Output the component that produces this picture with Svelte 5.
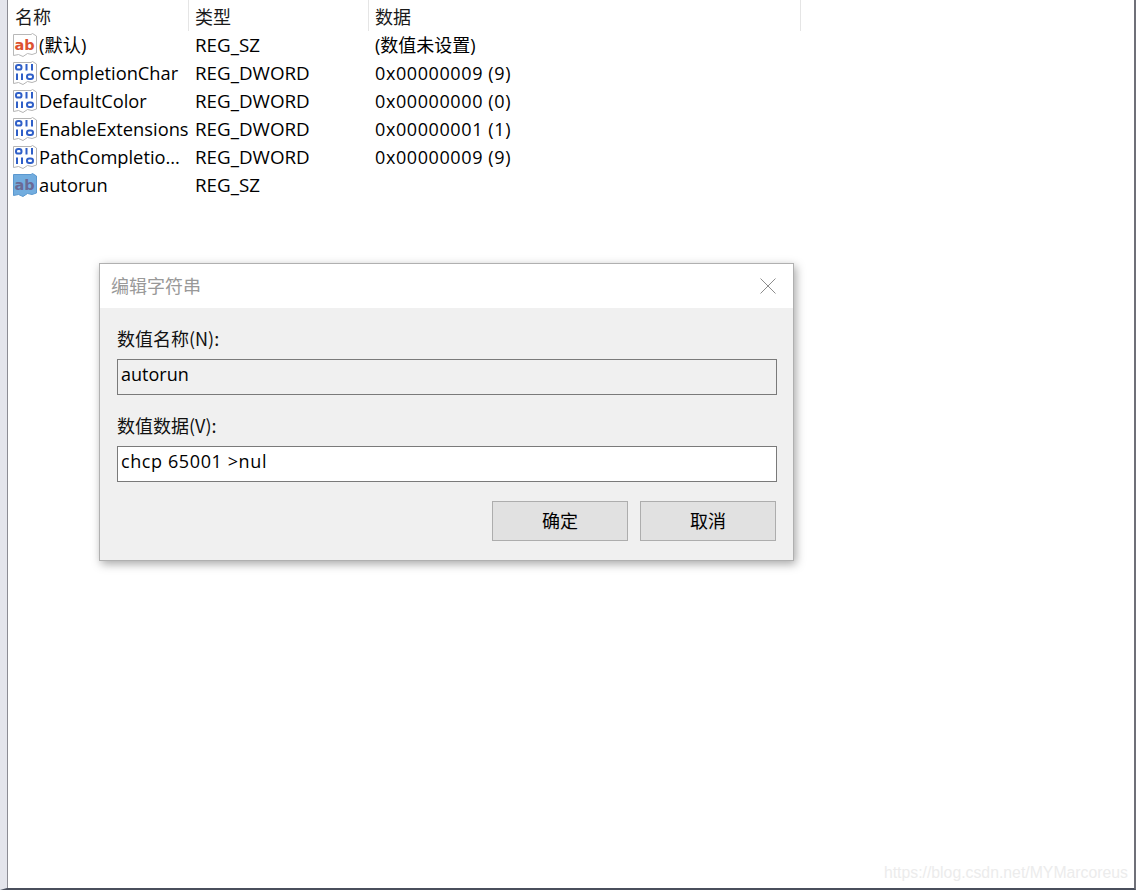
<script>
  const rows = [
    { icon: 'sz', name: '(默认)', type: 'REG_SZ', data: '(数值未设置)', hex: false },
    { icon: 'bin', name: 'CompletionChar', type: 'REG_DWORD', data: '0x00000009 (9)', hex: true },
    { icon: 'bin', name: 'DefaultColor', type: 'REG_DWORD', data: '0x00000000 (0)', hex: true },
    { icon: 'bin', name: 'EnableExtensions', type: 'REG_DWORD', data: '0x00000001 (1)', hex: true },
    { icon: 'bin', name: 'PathCompletio...', type: 'REG_DWORD', data: '0x00000009 (9)', hex: true },
    { icon: 'sel', name: 'autorun', type: 'REG_SZ', data: '', hex: false }
  ];
</script>

{#snippet page(fill, stroke)}
  <path d="M0.5 1.5 H18 L19.5 0.5 L23.5 3 V20 L19 21.5 L14.5 20.5 L10 23.5 L5.5 21.5 L0.5 22.5 Z" fill={fill} stroke={stroke} />
{/snippet}

<div class="window">
  <div class="list">
    <div class="head">
      <div class="hcell c1">名称</div>
      <div class="hcell c2">类型</div>
      <div class="hcell c3">数据</div>
    </div>
    {#each rows as row}
      <div class="row">
        <div class="c1 namecell">
          <svg class="icon" width="24" height="24" viewBox="0 0 24 24">
            {#if row.icon === 'bin'}
              {@render page('#ffffff', '#b4b4b4')}
              <g fill="none" stroke="#2f5fc8" stroke-width="2">
                <rect x="3" y="4" width="5.5" height="4.6" rx="2.2" />
                <path d="M13.5 3v6.6M19 3v6.6" />
                <path d="M4 12.4v6.6M9 12.4v6.6" />
                <rect x="14" y="13.4" width="6" height="4.6" rx="2.2" />
              </g>
            {:else if row.icon === 'sz'}
              {@render page('#ffffff', '#b8b8b8')}
              <text x="11.5" y="16.5" class="ab" fill="#dd5230">ab</text>
            {:else}
              {@render page('#72addf', '#5b98cf')}
              <text x="11.5" y="16.5" class="ab" fill="#6a6a96">ab</text>
            {/if}
          </svg>
          <span class="name">{row.name}</span>
        </div>
        <div class="c2 cell">{row.type}</div>
        <div class="c3 cell" class:hex={row.hex}>{row.data}</div>
      </div>
    {/each}
  </div>

  <div class="dialog">
    <div class="titlebar">
      <span class="title">编辑字符串</span>
      <svg class="close" width="16" height="16" viewBox="0 0 16 16">
        <path d="M0.5 0.5 L15.5 15.5 M15.5 0.5 L0.5 15.5" stroke="#8c8c8c" stroke-width="1" fill="none" />
      </svg>
    </div>
    <div class="body">
      <div class="label first">数值名称(N):</div>
      <div class="field readonly">autorun</div>
      <div class="label second">数值数据(V):</div>
      <div class="field value">chcp 65001 &gt;nul</div>
      <div class="buttons">
        <div class="btn">确定</div>
        <div class="btn">取消</div>
      </div>
    </div>
  </div>

  <div class="watermark">https://blog.csdn.net/MYMarcoreus</div>
</div>

<style>
  :global(body) {
    margin: 0;
    background: #fff;
  }

  .window {
    position: relative;
    box-sizing: border-box;
    width: 1136px;
    height: 890px;
    overflow: hidden;
    background: #fff;
    border-left: 7px solid #e4e5ec;
    border-right: 2px solid #6f7078;
    border-bottom: 2px solid #4a4f5c;
    font-family: "Noto Sans CJK SC", "Noto Sans", sans-serif;
    font-size: 18px;
    color: #000;
  }

  .list {
    border-left: 1px solid #8c8c94;
    height: 100%;
  }

  .head {
    display: flex;
    height: 31px;
  }

  .hcell {
    box-sizing: border-box;
    height: 31px;
    line-height: 33px;
    padding-left: 7px;
    border-right: 1px solid #e5e5e5;
    color: #1a1a1a;
    font-size: 18px;
  }

  .hcell.c2,
  .hcell.c3 {
    padding-left: 6px;
  }

  .c1 {
    width: 181px;
  }

  .c2 {
    width: 180px;
  }

  .c3 {
    width: 432px;
  }

  .row {
    display: flex;
    height: 28px;
    line-height: 28px;
  }

  .namecell {
    display: flex;
    align-items: center;
    font-family: "Open Sans", "Noto Sans CJK SC", sans-serif;
    font-size: 18.3px;
    white-space: nowrap;
  }

  .icon {
    flex: none;
    margin-left: 5px;
    margin-right: 2px;
  }

  .cell {
    box-sizing: border-box;
    padding-left: 6px;
    font-family: "Open Sans", "Noto Sans CJK SC", sans-serif;
    font-size: 18.8px;
    white-space: nowrap;
  }

  .c3.cell {
    font-size: 18px;
  }

  .c3.hex {
    letter-spacing: 0.6px;
  }

  .ab {
    font-family: "DejaVu Sans", sans-serif;
    font-size: 14.5px;
    font-weight: 700;
    text-anchor: middle;
  }

  .dialog {
    position: absolute;
    left: 92px;
    top: 263px;
    box-sizing: border-box;
    width: 695px;
    height: 298px;
    background: #f0f0f0;
    border: 1px solid #b0b0b0;
    box-shadow: 2px 3px 9px rgba(0, 0, 0, 0.35);
  }

  .titlebar {
    display: flex;
    align-items: center;
    justify-content: space-between;
    height: 44px;
    background: #fff;
    padding: 0 17px 0 11px;
  }

  .title {
    color: #999;
    font-size: 18px;
    line-height: 24px;
    margin-bottom: 2px;
  }

  .close {
    margin-bottom: 0;
  }

  .body {
    padding: 0 16px 0 17px;
  }

  .label {
    height: 24px;
    line-height: 24px;
    font-size: 18px;
    color: #111;
  }

  .label.first {
    padding-top: 18px;
    margin-bottom: 9px;
  }

  .label.second {
    padding-top: 18px;
    margin-bottom: 9px;
  }

  .field {
    box-sizing: border-box;
    height: 36px;
    line-height: 29px;
    padding-left: 3px;
    background: #fff;
    border: 1px solid #7a7a7a;
    font-family: "Open Sans", sans-serif;
    font-size: 18px;
  }

  .field.readonly {
    background: #f0f0f0;
  }

  .field.value {
    letter-spacing: 0.6px;
  }

  .buttons {
    display: flex;
    justify-content: flex-end;
    gap: 12px;
    margin-top: 19px;
    padding-right: 1px;
  }

  .btn {
    box-sizing: border-box;
    width: 136px;
    height: 40px;
    line-height: 37px;
    text-align: center;
    background: #e1e1e1;
    border: 1px solid #adadad;
    font-size: 18px;
  }

  .watermark {
    position: absolute;
    right: 6px;
    bottom: 6px;
    font-family: "Liberation Sans", sans-serif;
    font-size: 15.8px;
    color: #ececec;
  }
</style>
